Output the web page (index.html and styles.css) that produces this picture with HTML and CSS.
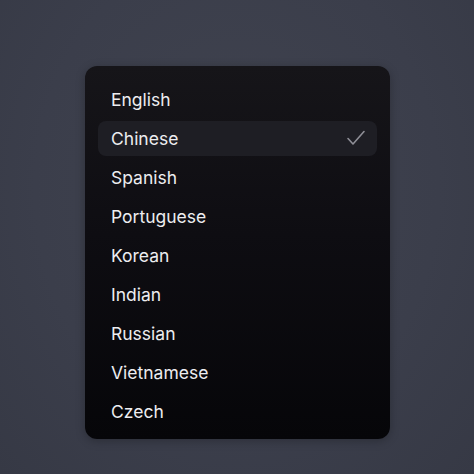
FILE: index.html
```html
<!DOCTYPE html>
<html>
<head>
<meta charset="utf-8">
<link rel="stylesheet" href="styles.css">
</head>
<body>
<div class="stage">
  <ul class="menu">
    <li class="item">English</li>
    <li class="item selected">Chinese
      <svg class="check" width="20" height="16" viewBox="0 0 20 16"><path d="M2 8.5 L7 14 L18 1.5" fill="none" stroke="#8e8e96" stroke-width="1.6" stroke-linecap="round" stroke-linejoin="round"/></svg>
    </li>
    <li class="item">Spanish</li>
    <li class="item">Portuguese</li>
    <li class="item">Korean</li>
    <li class="item">Indian</li>
    <li class="item">Russian</li>
    <li class="item">Vietnamese</li>
    <li class="item">Czech</li>
  </ul>
</div>
</body>
</html>
```
FILE: styles.css
```css
html, body {
  margin: 0;
  padding: 0;
}
body {
  width: 474px;
  height: 474px;
  background: radial-gradient(ellipse at 50% 40%, #40434f 0%, #3b3e4b 60%, #363945 100%);
  font-family: Inter, "Noto Sans", sans-serif;
}
.stage {
  padding: 66px 0 0 85px;
}
.menu {
  list-style: none;
  margin: 0;
  width: 305px;
  height: 373px;
  box-sizing: border-box;
  padding: 15.5px 13px 0 13px;
  border-radius: 12px;
  background: linear-gradient(180deg, #161519 0%, #0e0d12 45%, #060609 100%);
  display: flex;
  flex-direction: column;
  gap: 4.1px;
  box-shadow: 0 2px 10px rgba(0,0,0,0.25);
}
.item {
  height: 35px;
  flex: none;
  display: flex;
  align-items: center;
  justify-content: space-between;
  padding: 0 11px 0 13px;
  border-radius: 8px;
  color: #ededf0;
  font-size: 17.5px;
  letter-spacing: 0;
}
.selected {
  background: #1e1e24;
}
.check {
  display: block;
}
```
